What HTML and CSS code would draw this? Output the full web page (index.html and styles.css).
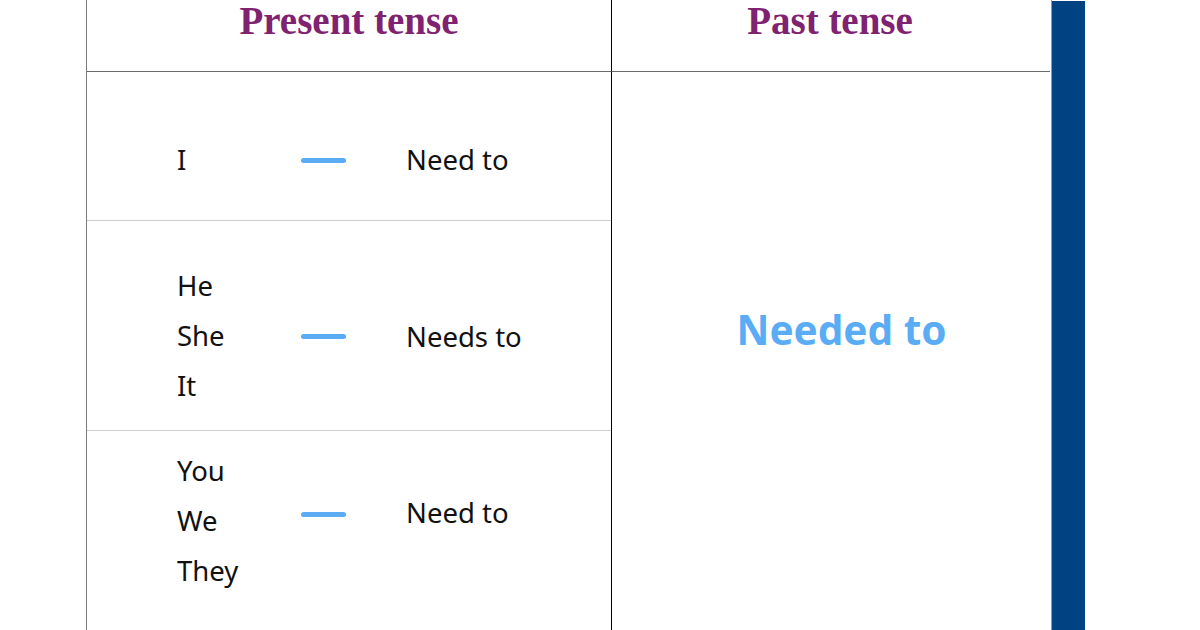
FILE: index.html
```html
<!DOCTYPE html>
<html>
<head>
<meta charset="utf-8">
<link rel="stylesheet" href="styles.css">
</head>
<body>
<div class="page">
  <div class="table">
    <div class="head head-present">Present tense</div>
    <div class="head head-past">Past tense</div>
    <div class="present">
      <div class="row row-1">
        <div class="pron"><div class="line">I</div></div>
        <div class="mid"><span class="dash"></span></div>
        <div class="verb">Need to</div>
      </div>
      <div class="row row-2">
        <div class="pron"><div class="line">He</div><div class="line">She</div><div class="line">It</div></div>
        <div class="mid"><span class="dash"></span></div>
        <div class="verb">Needs to</div>
      </div>
      <div class="row row-3">
        <div class="pron"><div class="line">You</div><div class="line">We</div><div class="line">They</div></div>
        <div class="mid"><span class="dash"></span></div>
        <div class="verb">Need to</div>
      </div>
    </div>
    <div class="past">
      <div class="past-word">Needed to</div>
    </div>
  </div>
  <div class="bar-wrap"><div class="bar"></div></div>
</div>
</body>
</html>
```

FILE: styles.css
```css
* { box-sizing: border-box; }
html, body { margin: 0; padding: 0; background: #fff; }
body {
  width: 1200px;
  height: 630px;
  overflow: hidden;
  font-family: "Noto Sans", "Open Sans", sans-serif;
  color: #111;
}
.page {
  display: flex;
  height: 630px;
  padding-left: 86px;
}
.table {
  display: grid;
  grid-template-columns: 525px 438px;
  grid-template-rows: 72px 1fr;
  border-left: 1px solid #7a7a7a;
  height: 630px;
}
.head {
  border-bottom: 1px solid #6a6a6a;
  text-align: center;
  font-family: "Liberation Serif", "Times New Roman", serif;
  font-weight: bold;
  font-size: 39px;
  line-height: 42px;
  color: #7f2270;
}
.head-present { border-right: 1px solid #000; }
.head-past { padding-right: 2px; }
.present {
  border-right: 1px solid #000;
  display: flex;
  flex-direction: column;
}
.row {
  display: flex;
  align-items: center;
  padding-left: 90px;
  font-size: 27.5px;
  line-height: 50px;
  border-bottom: 1px solid #cfcfcf;
}
.row-1 { height: 149px; padding-top: 28px; }
.row-2 { height: 210px; padding-top: 20px; }
.row-2 .mid, .row-2 .verb { margin-top: 2px; }
.row-3 {
  flex: 1;
  align-items: flex-start;
  padding-top: 15px;
  border-bottom: none;
}
.row-3 .mid, .row-3 .verb { margin-top: 42px; }
.row-3 .mid { margin-top: 43px; }
.pron { width: 124px; }
.mid {
  height: 50px;
  width: 45px;
  margin-right: 60px;
  display: flex;
  align-items: center;
}
.dash {
  display: block;
  width: 45px;
  height: 5px;
  border-radius: 3px;
  background: #5aacf5;
}
.past {
  padding-top: 231px;
  padding-left: 21px;
  text-align: center;
}
.past-word {
  font-size: 40.5px;
  font-weight: bold;
  line-height: 54px;
  color: #5aacf5;
}
.bar-wrap {
  margin-left: 1px;
  border-left: 1px solid #9a9a9a;
  padding-top: 1px;
  height: 630px;
}
.bar {
  width: 33px;
  height: 629px;
  background: #004282;
}
```
